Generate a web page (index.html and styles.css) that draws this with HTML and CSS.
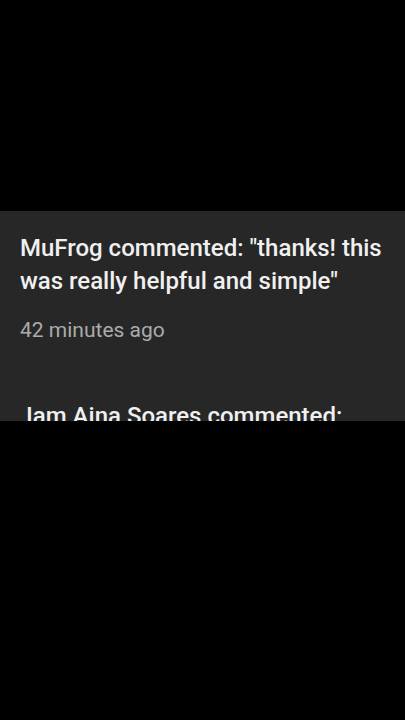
FILE: index.html
```html
<!DOCTYPE html>
<html>
<head>
<meta charset="utf-8">
<link rel="stylesheet" href="styles.css">
</head>
<body>
<div class="screen">
  <div class="panel">
    <div class="item">
      <p class="comment">MuFrog commented: "thanks! this was really helpful and simple"</p>
      <p class="time">42 minutes ago</p>
    </div>
    <div class="item item-next">
      <p class="comment">Iam Aina Soares commented:</p>
    </div>
  </div>
</div>
</body>
</html>
```
FILE: styles.css
```css
html, body {
  margin: 0;
  padding: 0;
  background: #000;
}
.screen {
  width: 405px;
  height: 720px;
  display: flex;
  flex-direction: column;
  padding-top: 211px;
  box-sizing: border-box;
  font-family: Roboto, "Noto Sans", sans-serif;
}
.panel {
  height: 210px;
  background: #272727;
  overflow: hidden;
  padding: 21px 6px 0 20px;
  box-sizing: border-box;
}
.comment {
  margin: 0;
  color: #f0f0f0;
  font-size: 24px;
  font-weight: 500;
  line-height: 33px;
}
.time {
  margin: 20px 0 0;
  color: #ababab;
  font-size: 21px;
  line-height: 24px;
}
.item-next {
  margin-top: 58px;
  padding-left: 6px;
}
```
